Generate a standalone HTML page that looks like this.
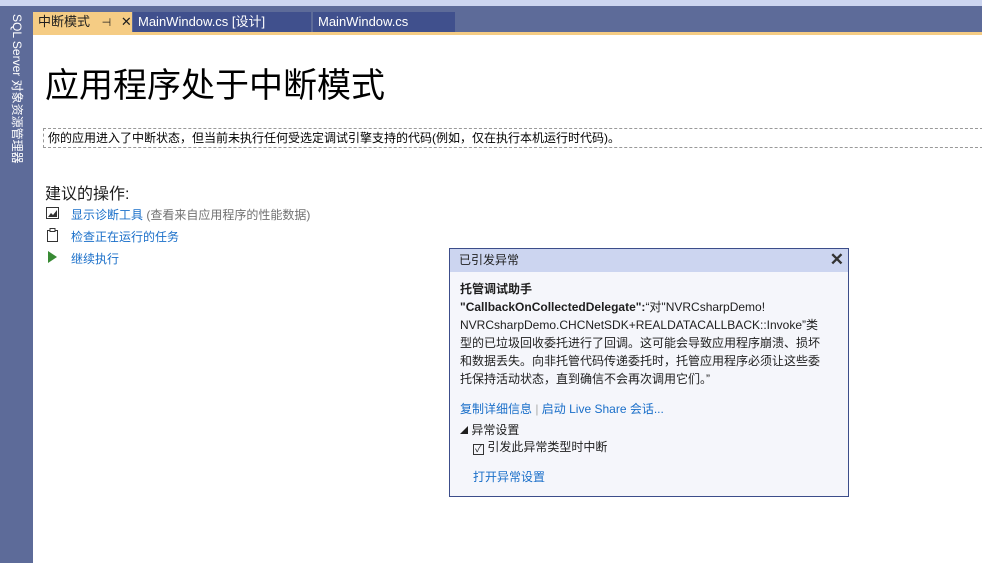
<!DOCTYPE html>
<html><head><meta charset="utf-8"><style>
*{margin:0;padding:0;box-sizing:border-box}
body{width:982px;height:563px;overflow:hidden;background:#fff;font-family:"Liberation Sans","Noto Sans CJK SC",sans-serif;position:relative}
.top{position:absolute;left:0;top:0;width:982px;height:6px;background:#ccd5f0}
.bar{position:absolute;left:0;top:6px;width:982px;height:29px;background:#5d6b99}
.side{position:absolute;left:0;top:6px;width:33px;height:557px;background:#5d6b99}
.sidetxt{position:absolute;left:24px;top:8px;transform:rotate(90deg);transform-origin:0 0;color:#fff;font-size:12px;white-space:nowrap;line-height:14px}
.tab{position:absolute;top:12px;height:20px;font-size:13px;line-height:20px;padding-left:5px;white-space:nowrap}
.t1{left:33px;width:99px;background:#f5cc84;color:#1e1e1e}
.t2{left:133px;width:178px;background:#40508d;color:#fff}
.t3{left:313px;width:142px;background:#40508d;color:#fff}
.yl{position:absolute;left:33px;top:32px;width:949px;height:3px;background:#f5cc84}
h1{position:absolute;left:45px;top:58px;font-size:34px;font-weight:normal;color:#000}
.info{position:absolute;left:43px;top:128px;width:945px;height:20px;border:1px dashed #999;font-size:12px;line-height:18px;padding-left:4px;color:#000}
.h2{position:absolute;left:45px;top:180px;font-size:16px;color:#1e1e1e}
.act{position:absolute;left:71px;font-size:12px;color:#1a6fc9}
.act span{color:#717171}
.dlg{position:absolute;left:449px;top:248px;width:400px;height:249px;border:1px solid #3c4d8a;background:#f5f6fb}
.dh{height:23px;background:#ccd5f0;font-size:12px;line-height:23px;padding-left:9px;color:#1e1e1e}
.x{position:absolute;right:4px;top:1px;font-size:17px;font-weight:bold;color:#333}
.dt{position:absolute;left:10px;top:31px;font-size:12px;line-height:18px;color:#1e1e1e;width:388px}
.lnk{color:#1a6fc9;font-size:12px;position:absolute}
</style></head><body>
<div class="top"></div><div class="bar"></div>
<div class="side"><div class="sidetxt">SQL Server 对象资源管理器</div></div>
<div class="tab t1">中断模式 <span style="margin-left:8px;font-size:11px">⊣</span> <span style="margin-left:6px">✕</span></div>
<div class="tab t2">MainWindow.cs [设计]</div>
<div class="tab t3">MainWindow.cs</div>
<div class="yl"></div>
<h1>应用程序处于中断模式</h1>
<div class="info">你的应用进入了中断状态，但当前未执行任何受选定调试引擎支持的代码(例如，仅在执行本机运行时代码)。</div>
<div class="h2">建议的操作:</div>
<svg style="position:absolute;left:46px;top:207px" width="13" height="12"><rect x=".5" y=".5" width="12" height="11" fill="none" stroke="#333"/><path d="M2 10L5 6 7 8 11 3V10Z" fill="#333"/></svg>
<div class="act" style="top:206px">显示诊断工具 <span>(查看来自应用程序的性能数据)</span></div>
<svg style="position:absolute;left:47px;top:228px" width="11" height="14"><rect x=".5" y="2.5" width="10" height="11" fill="none" stroke="#333"/><rect x="3" y=".5" width="5" height="3" fill="#fff" stroke="#333"/></svg>
<div class="act" style="top:228px">检查正在运行的任务</div>
<svg style="position:absolute;left:48px;top:251px" width="10" height="12"><path d="M0 0L9 6 0 12Z" fill="#388a34"/></svg>
<div class="act" style="top:250px">继续执行</div>
<div class="dlg">
<div class="dh">已引发异常</div><div class="x">✕</div>
<div class="dt"><b>托管调试助手<br>"CallbackOnCollectedDelegate":</b>“对"NVRCsharpDemo!<br>NVRCsharpDemo.CHCNetSDK+REALDATACALLBACK::Invoke”类<br>型的已垃圾回收委托进行了回调。这可能会导致应用程序崩溃、损坏<br>和数据丢失。向非托管代码传递委托时，托管应用程序必须让这些委<br>托保持活动状态，直到确信不会再次调用它们。”</div>
<div class="lnk" style="left:10px;top:151px">复制详细信息 <span style="color:#aaa">|</span> 启动 Live Share 会话...</div>
<div style="position:absolute;left:10px;top:172px;font-size:12px;color:#1e1e1e"><span style="font-size:8px;vertical-align:1px">◢</span> 异常设置</div>
<div style="position:absolute;left:23px;top:189px;font-size:12px;color:#1e1e1e"><span style="display:inline-block;width:11px;height:11px;border:1px solid #333;font-size:10px;line-height:9px;text-align:center;vertical-align:-1px">✓</span> 引发此异常类型时中断</div>
<div class="lnk" style="left:23px;top:219px">打开异常设置</div>
</div>
</body></html>
